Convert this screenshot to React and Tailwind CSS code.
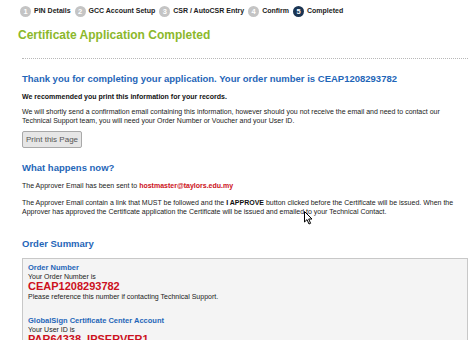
const steps = [
  { n: 1, label: 'PIN Details' },
  { n: 2, label: 'GCC Account Setup' },
  { n: 3, label: 'CSR / AutoCSR Entry' },
  { n: 4, label: 'Confirm' },
  { n: 5, label: 'Completed', active: true },
];

function Step({ n, label, active }) {
  return (
    <div className="flex items-center gap-[3px]">
      <span
        className={`flex h-[11px] w-[11px] items-center justify-center rounded-full text-[7.5px] font-bold leading-none text-white ${
          active ? 'bg-[#1b3553]' : 'bg-[#c4c4c4]'
        }`}
      >
        {n}
      </span>
      <span className="text-[7px] font-bold text-[#222]">{label}</span>
    </div>
  );
}

export default function App() {
  return (
    <div
      className="relative h-[340px] w-[474px] overflow-hidden bg-white text-[#111]"
      style={{ fontFamily: '"Liberation Sans", Arial, sans-serif' }}
    >
      <div className="flex items-center gap-[4px] pl-[20px] pt-[6px]">
        {steps.map((s) => (
          <Step key={s.n} {...s} />
        ))}
      </div>

      <h1 className="mt-[10px] pl-[18px] text-[12px] font-bold leading-[16px] text-[#8cb82b]">
        Certificate Application Completed
      </h1>

      <div className="ml-[22px] mr-[6px] mt-[15px] border-t border-dotted border-[#b8b8b8]" />

      <div className="pl-[22px] pr-[10px]">
        <h2 className="mt-[14px] text-[9.5px] font-bold leading-[12px] text-[#1f66b8]">
          Thank you for completing your application. Your order number is CEAP1208293782
        </h2>
        <p className="mt-[7px] text-[7px] font-bold leading-[9px]">
          We recommended you print this information for your records.
        </p>
        <p className="mt-[6px] text-[7px] leading-[9px] text-[#222]">
          We will shortly send a confirmation email containing this information, however should you not receive the email and need to contact our Technical Support team, you will need your Order Number or Voucher and your User ID.
        </p>
        <button className="mt-[4px] rounded-[2px] border border-[#a9a9a9] bg-[#e6e6e6] px-[3px] py-[2px] text-[8px] leading-[11px] text-[#555]">
          Print this Page
        </button>

        <h2 className="mt-[13px] text-[9.5px] font-bold leading-[12px] text-[#1f66b8]">
          What happens now?
        </h2>
        <p className="mt-[7px] text-[7px] leading-[9px] text-[#222]">
          The Approver Email has been sent to{' '}
          <span className="font-bold text-[#cc1020]">hostmaster@taylors.edu.my</span>
        </p>
        <p className="mt-[8px] text-[7px] leading-[9px] text-[#222]">
          The Approver Email contain a link that MUST be followed and the <b className="text-[#111]">I APPROVE</b> button clicked before the Certificate will be issued. When the Approver has approved the Certificate application the Certificate will be issued and emailed to your Technical Contact.
        </p>

        <h2 className="mt-[22px] text-[9.5px] font-bold leading-[12px] text-[#1f66b8]">
          Order Summary
        </h2>
        <div className="mr-[-4px] mt-[8px] border border-[#c8c8c8] bg-[#f4f4f4] px-[5px] pb-[8px] pt-[4px]">
          <div className="text-[7.5px] font-bold leading-[9px] text-[#1f66b8]">Order Number</div>
          <div className="text-[7px] leading-[9px] text-[#222]">Your Order Number is</div>
          <div className="text-[11px] font-bold leading-[11px] text-[#cc1020]">CEAP1208293782</div>
          <div className="text-[7px] leading-[9px] text-[#222]">
            Please reference this number if contacting Technical Support.
          </div>
          <div className="mt-[15px] text-[7.5px] font-bold leading-[9px] text-[#1f66b8]">
            GlobalSign Certificate Center Account
          </div>
          <div className="text-[7px] leading-[9px] text-[#222]">Your User ID is</div>
          <div className="text-[11px] font-bold leading-[11px] text-[#cc1020]">PAR64338_IPSERVER1</div>
        </div>
      </div>

      <svg
        className="absolute left-[304px] top-[211px]"
        width="9"
        height="14"
        viewBox="0 0 9 14"
      >
        <path d="M0.5 0.5 L0.5 11 L3 8.6 L5 13 L6.6 12.3 L4.7 8 L8 8 Z" fill="white" stroke="black" strokeWidth="1" />
      </svg>
    </div>
  );
}
